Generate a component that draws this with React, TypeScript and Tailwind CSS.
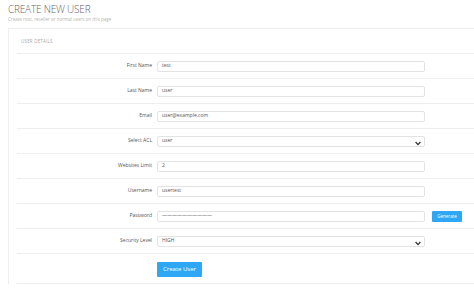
import React from "react";

const Chevron = () => (
  <svg width="6" height="5" viewBox="0 0 6 5" className="absolute right-[3px] top-[4px]">
    <path d="M0.6 1 L3 3.6 L5.4 1" fill="none" stroke="#333" strokeWidth="1.3" />
  </svg>
);

function Row({ label, value, select, extra }: { label: string; value: string; select?: boolean; extra?: React.ReactNode }) {
  return (
    <div className="flex items-center h-[25px] border-b border-[#eeeeee]">
      <div className="w-[140px] text-right pr-[5px] text-[5px] text-[#555]">{label}</div>
      <div className="relative w-[268px] h-[11px] border border-[#e3e3e3] rounded-[2px] bg-white flex items-center pl-[4px] text-[5px] text-[#555]">
        {value}
        {select && <Chevron />}
      </div>
      {extra}
    </div>
  );
}

export default function App() {
  return (
    <div className="w-[474px] h-[289px] overflow-hidden bg-white" style={{ fontFamily: '"Open Sans", "Liberation Sans", sans-serif' }}>
      <div className="pl-[8px] pt-[4px]">
        <div className="text-[10px] leading-[11px] font-light text-[#666] tracking-[-0.2px]">CREATE NEW USER</div>
        <div className="text-[4.5px] leading-[6px] text-[#b5b5b5] mt-[1px]">Create root, reseller or normal users on this page</div>
        <div className="mt-[6px] border-l border-t border-[#eeeeee] pl-[8px]">
          <div className="h-[25px] flex items-center pl-[4px] text-[4.5px] text-[#aaa] border-b border-[#eeeeee] tracking-[0.2px]">USER DETAILS</div>
          <Row label="First Name" value="test" />
          <Row label="Last Name" value="user" />
          <Row label="Email" value="user@example.com" />
          <Row label="Select ACL" value="user" select />
          <Row label="Websites Limit" value="2" />
          <Row label="Username" value="usertest" />
          <Row
            label="Password"
            value="——————————"
            extra={
              <div className="ml-[7px] w-[30px] h-[11px] bg-[#2ea8f4] rounded-[1px] flex items-center justify-center text-[4.5px] text-white">Generate</div>
            }
          />
          <Row label="Security Level" value="HIGH" select />
          <div className="h-[30px] flex items-start pt-[8px] pl-[140px] border-b border-[#eeeeee]">
            <div className="w-[45px] h-[15px] bg-[#2ea8f4] rounded-[1px] flex items-center justify-center text-[6px] text-white">Create User</div>
          </div>
        </div>
      </div>
    </div>
  );
}
